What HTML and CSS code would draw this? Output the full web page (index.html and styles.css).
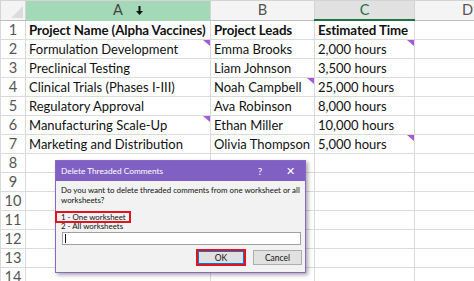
FILE: index.html
```html
<!DOCTYPE html>
<html lang="en">
<head>
    <meta charset="UTF-8">
    <title>Delete Threaded Comments</title>
    <link rel="stylesheet" href="styles.css">
</head>
<body>
    <div class="sheet">
        <table class="grid">
            <colgroup>
                <col class="col-rh">
                <col class="col-a">
                <col class="col-b">
                <col class="col-c">
                <col class="col-d">
            </colgroup>
            <tr class="head">
                <th class="corner"><span class="corner-mark"></span></th>
                <th class="col-sel">A
                    <svg class="cursor" width="7" height="9" viewBox="0 0 7 9"><path d="M2.5 0h2v5h2.5l-3.5 4l-3.5-4h2.5z" fill="#111"/></svg>
                </th>
                <th>B</th>
                <th class="col-active">C</th>
                <th>D</th>
            </tr>
            <tr>
                <th>1</th>
                <td class="bold">Project Name (Alpha Vaccines)</td>
                <td class="bold">Project Leads</td>
                <td class="bold">Estimated Time</td>
                <td></td>
            </tr>
            <tr>
                <th>2</th>
                <td class="note">Formulation Development</td>
                <td>Emma Brooks</td>
                <td class="note">2,000 hours</td>
                <td></td>
            </tr>
            <tr>
                <th>3</th>
                <td>Preclinical Testing</td>
                <td>Liam Johnson</td>
                <td>3,500 hours</td>
                <td></td>
            </tr>
            <tr>
                <th>4</th>
                <td>Clinical Trials (Phases I-III)</td>
                <td class="note">Noah Campbell</td>
                <td>25,000 hours</td>
                <td></td>
            </tr>
            <tr>
                <th>5</th>
                <td>Regulatory Approval</td>
                <td>Ava Robinson</td>
                <td>8,000 hours</td>
                <td></td>
            </tr>
            <tr>
                <th>6</th>
                <td class="note">Manufacturing Scale-Up</td>
                <td>Ethan Miller</td>
                <td>10,000 hours</td>
                <td></td>
            </tr>
            <tr>
                <th>7</th>
                <td>Marketing and Distribution</td>
                <td>Olivia Thompson</td>
                <td class="note">5,000 hours</td>
                <td></td>
            </tr>
            <tr><th>8</th><td></td><td></td><td></td><td></td></tr>
            <tr><th>9</th><td></td><td></td><td></td><td></td></tr>
            <tr><th>10</th><td></td><td></td><td></td><td></td></tr>
            <tr><th>11</th><td></td><td></td><td></td><td></td></tr>
            <tr><th>12</th><td></td><td></td><td></td><td></td></tr>
            <tr><th>13</th><td></td><td></td><td></td><td></td></tr>
            <tr><th>14</th><td></td><td></td><td></td><td></td></tr>
        </table>

        <div class="dialog">
            <div class="dialog-title">
                <span class="dialog-name">Delete Threaded Comments</span>
                <span class="dialog-help">?</span>
                <span class="dialog-close">✕</span>
            </div>
            <div class="dialog-body">
                <p class="prompt">Do you want to delete threaded comments from one worksheet or all<br>worksheets?</p>
                <div class="options">
                    <span class="option marked">1 - One worksheet</span>
                    <span class="option">2 - All worksheets</span>
                </div>
                <div class="input"><span class="caret"></span></div>
                <div class="buttons">
                    <div class="btn-mark"><button class="btn btn-ok">OK</button></div>
                    <button class="btn">Cancel</button>
                </div>
            </div>
        </div>
    </div>
</body>
</html>
```

FILE: styles.css
```css
body {
    margin: 0;
    background: #fff;
    overflow: hidden;
}

.sheet {
    position: relative;
    width: 474px;
    height: 281px;
    overflow: hidden;
}

.grid {
    border-collapse: collapse;
    table-layout: fixed;
    width: 520px;
    font-family: Lato, "Open Sans", sans-serif;
    font-size: 13px;
    color: #111;
}

.col-rh { width: 25px; }
.col-a { width: 185px; }
.col-b { width: 104px; }
.col-c { width: 100px; }
.col-d { width: 106px; }

.grid tr {
    height: 19px;
}

.grid td,
.grid th {
    padding: 0 0 0 3px;
    border: 1px solid #dadada;
    white-space: nowrap;
    overflow: hidden;
    line-height: 18px;
    text-align: left;
    font-weight: normal;
}

.grid td {
    font-size: 13px;
}

.grid th {
    background: #fff;
    color: #555;
    text-align: center;
    padding: 0;
    border-color: #dadada;
    font-size: 14.6px;
}

.grid .head th {
    background: #f4f4f4;
    color: #555;
    height: 18px;
    border-color: #d4d4d4;
    border-bottom: 1px solid #bdbdbd;
    overflow: visible;
}

.grid .head th.col-sel {
    background: #a4d9b8;
    color: #444;
    border-bottom: 1px solid #a4d9b8;
    position: relative;
}

.grid .head th.col-active {
    background: #e1e1e1;
    color: #1e7145;
    border-bottom: 2px solid #217346;
}

.cursor {
    position: absolute;
    left: 110px;
    top: 5px;
}

.corner {
    position: relative;
}

.corner-mark {
    position: absolute;
    right: 2px;
    bottom: 2px;
    width: 0;
    height: 0;
    border-left: 12px solid transparent;
    border-bottom: 12px solid #dcdcdc;
}

.grid td.bold {
    font-weight: bold;
    font-size: 13.3px;
    letter-spacing: -0.1px;
}

.grid td.note {
    position: relative;
    overflow: visible;
}

.grid td.note::after {
    content: "";
    position: absolute;
    top: 0;
    right: 0;
    width: 0;
    height: 0;
    border-left: 7px solid transparent;
    border-top: 6px solid #a25ad8;
}

/* dialog over the sheet */
.dialog {
    position: absolute;
    left: 55px;
    top: 160px;
    width: 249px;
    height: 111px;
    background: #f2f2f2;
    border: 1px solid #8a67c7;
    box-shadow: 2px 2px 4px rgba(0, 0, 0, 0.35);
    font-family: Lato, "Noto Sans", sans-serif;
    font-size: 7.9px;
    color: #111;
}

.dialog-title {
    display: flex;
    align-items: center;
    height: 20px;
    background: #8060c2;
    color: #fff;
    padding: 0 0 0 5px;
}

.dialog-name {
    flex: 1;
    font-size: 8.3px;
}

.dialog-help {
    width: 30px;
    text-align: center;
    font-size: 10px;
}

.dialog-close {
    width: 30px;
    text-align: center;
    font-size: 11px;
}

.dialog-body {
    padding: 5px 3px 0 5px;
}

.prompt {
    margin: 0;
    line-height: 9.5px;
    white-space: nowrap;
}

.options {
    display: flex;
    flex-direction: column;
    align-items: flex-start;
    margin-top: 6px;
    line-height: 9px;
}

.option {
    padding: 0 3px 0 0;
}

.option.marked {
    border: 2px solid #e0141e;
    margin-left: -6px;
    margin-bottom: -1px;
    padding: 0 3px 0 4px;
    line-height: 8px;
}

.input {
    height: 11px;
    margin: 1px 1px 0 1px;
    background: #fff;
    border: 1px solid #a0a0a0;
    position: relative;
}

.caret {
    position: absolute;
    left: 2px;
    top: 1px;
    width: 1px;
    height: 9px;
    background: #111;
}

.buttons {
    display: flex;
    justify-content: flex-end;
    align-items: center;
    gap: 7px;
    margin-top: 4px;
}

.btn {
    width: 49px;
    height: 15px;
    padding: 0;
    background: #e1e1e1;
    border: 1px solid #adadad;
    font-family: Lato, "Noto Sans", sans-serif;
    font-size: 8.5px;
    color: #111;
}

.btn-mark {
    border: 2px solid #e0141e;
    padding: 0;
    display: flex;
}

.btn-ok {
    border: 1px solid #0078d7;
    width: 46px;
    height: 13px;
}
```
